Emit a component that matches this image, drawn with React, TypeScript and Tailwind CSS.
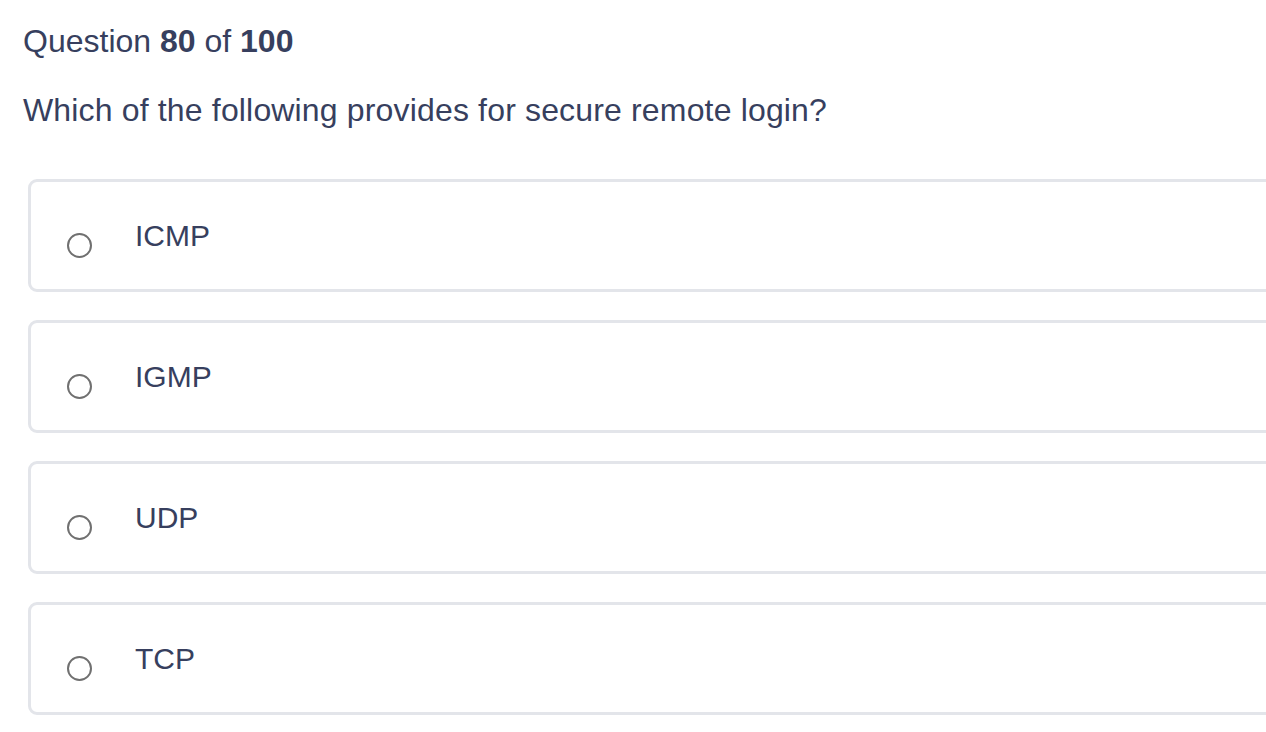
import React from "react";

const options = ["ICMP", "IGMP", "UDP", "TCP"];

export default function App() {
  return (
    <div
      className="min-h-[732px] bg-white pl-[23px] pt-[21px] text-[#373f5e]"
      style={{ fontFamily: '"Liberation Sans", Arial, Helvetica, sans-serif' }}
    >
      <div className="text-[32px] leading-[40px]">
        Question <span className="font-bold">80</span> of{" "}
        <span className="font-bold">100</span>
      </div>
      <div className="mt-[29px] text-[32px] leading-[40px] tracking-[0.16px]">
        Which of the following provides for secure remote login?
      </div>
      <div className="mt-[49px] ml-[5px] flex flex-col gap-[28px] -mr-[20px]">
        {options.map((o) => (
          <label
            key={o}
            className="flex h-[113px] items-center rounded-[9px] border-[3px] border-[#e3e5ea] bg-white pl-[36px]"
          >
            <span className="mt-[20px] block h-[25px] w-[25px] shrink-0 rounded-full border-2 border-[#707070]" />
            <span className="ml-[43px] text-[30px] leading-[36px]">{o}</span>
          </label>
        ))}
      </div>
    </div>
  );
}
